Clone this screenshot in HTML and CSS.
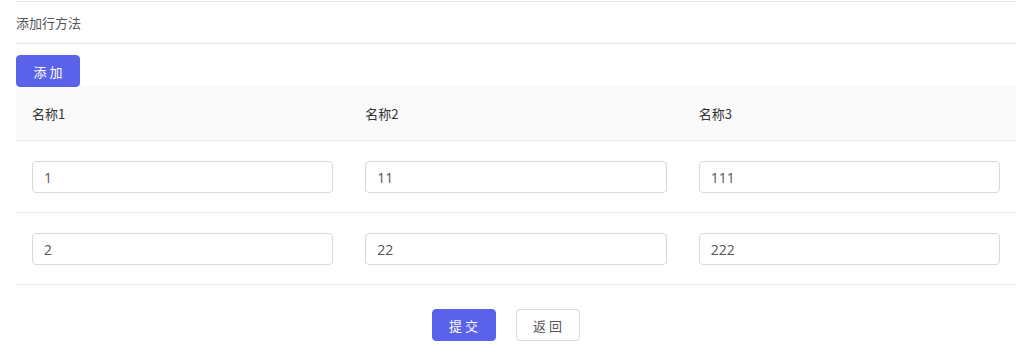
FILE: index.html
```html
<!DOCTYPE html>
<html lang="zh-CN">
<head>
    <meta charset="UTF-8">
    <title>添加行方法</title>
    <link rel="stylesheet" href="styles.css">
</head>
<body>
    <div class="page">
        <div class="page-title">添加行方法</div>
        <div class="toolbar">
            <button class="btn btn-primary">添 加</button>
        </div>
        <table class="grid">
            <thead>
                <tr>
                    <th>名称1</th>
                    <th>名称2</th>
                    <th>名称3</th>
                </tr>
            </thead>
            <tbody>
                <tr>
                    <td><input class="field" value="1"></td>
                    <td><input class="field" value="11"></td>
                    <td><input class="field" value="111"></td>
                </tr>
                <tr>
                    <td><input class="field" value="2"></td>
                    <td><input class="field" value="22"></td>
                    <td><input class="field" value="222"></td>
                </tr>
            </tbody>
        </table>
        <div class="footer">
            <button class="btn btn-primary">提 交</button>
            <button class="btn btn-default">返 回</button>
        </div>
    </div>
</body>
</html>
```

FILE: styles.css
```css
body {
    margin: 0;
    font-family: "Noto Sans CJK SC", "Open Sans", sans-serif;
    color: #333;
    background: #fff;
}
.page {
    margin-left: 16px;
    width: 1000px;
    border-top: 1px solid #e6e6e6;
    margin-top: 1px;
}
.page-title {
    height: 41px;
    line-height: 41px;
    font-size: 13px;
    color: #555;
    border-bottom: 1px solid #e6e6e6;
}
.toolbar {
    padding-top: 11px;
    height: 32px;
}
.btn {
    height: 32px;
    width: 64px;
    border-radius: 4px;
    font-size: 13px;
    font-family: inherit;
    cursor: pointer;
    padding: 0;
}
.btn-primary {
    background-color: #5b62ea;
    border: 1px solid #5b62ea;
    color: #fff;
}
.btn-default {
    background-color: #fff;
    border: 1px solid #d9d9d9;
    color: #555;
}
.grid {
    width: 100%;
    border-collapse: collapse;
    table-layout: fixed;
}
.grid th {
    background-color: #fafafa;
    height: 53px;
    padding: 0 16px;
    text-align: left;
    font-weight: normal;
    font-size: 13px;
    color: #333;
    border-bottom: 1px solid #e8e8e8;
}
.grid td {
    padding: 20px 16px 19px;
    border-bottom: 1px solid #e8e8e8;
}
.field {
    display: block;
    box-sizing: border-box;
    width: 100%;
    height: 32px;
    padding: 0 11px;
    border: 1px solid #d9d9d9;
    border-radius: 4px;
    font-family: "Open Sans", sans-serif;
    font-size: 14px;
    color: #555;
    outline: none;
}
.footer {
    display: flex;
    justify-content: center;
    gap: 20px;
    padding: 24px 21px 0 0;
}
```
